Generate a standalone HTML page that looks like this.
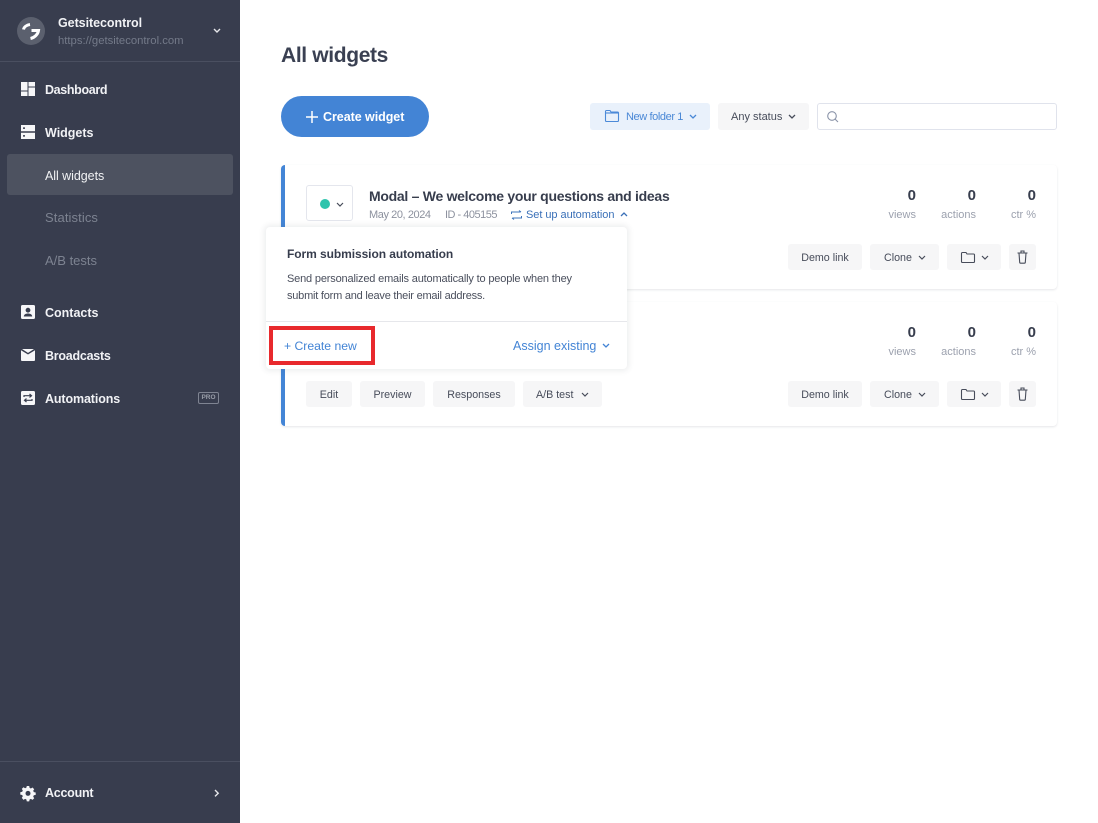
<!DOCTYPE html>
<html lang="en"><head><meta charset="utf-8"><title>All widgets</title>
<style>
html,body{margin:0;padding:0;width:1098px;height:823px;overflow:hidden;background:#fff;font-family:"Liberation Sans",sans-serif;color:#373d4d}
.a{position:absolute}
.t{position:absolute;white-space:nowrap;line-height:16px}
#side{position:absolute;left:0;top:0;width:240px;height:823px;background:#383d4e}
.nav{position:absolute;left:45px;font-size:12.5px;font-weight:700;color:#f1f2f5;line-height:16px;white-space:nowrap;letter-spacing:-.25px}
.sub{font-weight:400;color:#7d8391;font-size:13px;letter-spacing:.1px}
.btn{position:absolute;background:#f6f6f7;border-radius:3px;height:26px;font-size:10.7px;line-height:28px;color:#474c5a;text-align:center;white-space:nowrap}
.card{position:absolute;left:281px;width:776px;background:#fff;border-radius:4px;box-shadow:0 1px 2px rgba(55,61,77,.13)}
.bar{position:absolute;left:0;top:0;bottom:0;width:4px;background:#4385d6;border-radius:4px 0 0 4px}
.num{position:absolute;font-size:15px;font-weight:700;text-align:right;line-height:18px;color:#373d4d}
.lab{position:absolute;font-size:11px;color:#9ca1ae;text-align:right;line-height:14px;white-space:nowrap}
svg{position:absolute;overflow:visible}
</style></head><body>
<div id="side">
<div class="a" style="left:0;top:61px;width:240px;height:1px;background:#4a4f60"></div>
<div class="a" style="left:17px;top:17px;width:28px;height:28px;border-radius:50%;background:#5b606e"></div>
<svg style="left:17px;top:17px" width="28" height="28" fill="none" stroke="#fff" stroke-width="3"><path d="M6.500 12.500C7 10 9.500 8 13 7.500"/><path d="M14.500 13.500h7C21 17 18 20.500 13.500 21.500"/></svg>
<div class="t" style="left:58px;top:15px;font-size:12.500px;font-weight:700;color:#f1f2f5;letter-spacing:-.05px">Getsitecontrol</div>
<div class="t" style="left:58px;top:33px;font-size:11.300px;color:#747a89">https://getsitecontrol.com</div>
<svg style="left:213px;top:28px" width="8" height="6" fill="none" stroke="#e6e7ea" stroke-width="1.400"><path d="M1 1l3 3 3-3"/></svg>

<svg style="left:21px;top:82px" width="14" height="14" fill="#f6f6f8"><path d="M0 0h6.500v8.500H0zM7.500 0H14v4.500H7.500zM0 9.500h6.500V14H0zM7.500 5.500H14V14H7.500z"/></svg>
<div class="nav" style="top:82px;letter-spacing:-.35px">Dashboard</div>
<svg style="left:21px;top:125px" width="14" height="14" fill="#f6f6f8"><path fill-rule="evenodd" d="M0 0h14v6.300H0zM2 2.400v1.500h2V2.400zM0 7.700h14V14H0zM2 10.100v1.500h2v-1.500z"/></svg>
<div class="nav" style="top:125px;letter-spacing:0">Widgets</div>
<div class="a" style="left:7px;top:154px;width:226px;height:41px;background:#4d5260;border-radius:3px"></div>
<div class="nav" style="top:168px;font-weight:400;color:#f1f2f4;letter-spacing:-.05px">All widgets</div>
<div class="nav sub" style="top:210px">Statistics</div>
<div class="nav sub" style="top:253px;letter-spacing:0">A/B tests</div>
<svg style="left:21px;top:305px" width="14" height="14"><rect width="14" height="14" rx="1.500" fill="#f6f6f8"/><circle cx="7" cy="5.200" r="2.400" fill="#383d4e"/><path d="M2.800 11.500c0-2 2-3 4.200-3s4.200 1 4.200 3z" fill="#383d4e"/></svg>
<div class="nav" style="top:305px;letter-spacing:0">Contacts</div>
<svg style="left:21px;top:349px" width="14" height="12"><path d="M0 1.200L7 5.500l7-4.300V11a1 1 0 0 1-1 1H1a1 1 0 0 1-1-1z" fill="#f6f6f8"/><path d="M1 0h12L7 3.900z" fill="#f6f6f8"/></svg>
<div class="nav" style="top:348px">Broadcasts</div>
<svg style="left:21px;top:391px" width="14" height="14"><rect width="14" height="14" rx="1.500" fill="#f6f6f8"/><path d="M3 6V4.700h7M8.500 3l2 1.700-2 1.700M11 8v1.300H4M5.500 7.600l-2 1.700 2 1.700" fill="none" stroke="#383d4e" stroke-width="1.200"/></svg>
<div class="nav" style="top:391px;letter-spacing:-.12px">Automations</div>
<div class="a" style="left:198px;top:392px;width:19px;height:10px;border:1px solid #7f8492;border-radius:2px;font-size:6.500px;font-weight:700;line-height:10px;text-align:center;color:#9a9ea9">PRO</div>
<div class="a" style="left:0;top:761px;width:240px;height:1px;background:#4a4f60"></div>
<svg style="left:21px;top:786px" width="14" height="14" viewBox="0 0 14 14"><path d="M5.800 0h2.400l.4 1.900 1.300.6 1.600-1 1.700 1.700-1 1.600.6 1.300 1.900.4v2.400l-1.900.4-.6 1.300 1 1.600-1.700 1.700-1.600-1-1.300.6-.4 1.900H5.800l-.4-1.900-1.300-.6-1.600 1L.800 11.900l1-1.600-.6-1.300L-.700 8.600V6.200l1.900-.4.6-1.300-1-1.600L2.500 1.200l1.600 1 1.300-.6z" fill="#f6f6f8"/><circle cx="7" cy="7.400" r="2.500" fill="#383d4e"/></svg>
<div class="nav" style="top:785px">Account</div>
<svg style="left:214px;top:789px" width="6" height="9" fill="none" stroke="#e6e7ea" stroke-width="1.400"><path d="M1 1l3.200 3.200L1 7.400"/></svg>
</div>

<div class="t" style="left:281px;top:43px;font-size:21px;line-height:26px;font-weight:700;color:#3a4052;letter-spacing:-.35px">All widgets</div>

<div class="a" style="left:281px;top:96px;width:148px;height:41px;border-radius:21px;background:#4384d5"></div>
<svg style="left:306px;top:111px" width="12" height="12" stroke="#fff" stroke-width="1.500"><path d="M6 0v12M0 6h12"/></svg>
<div class="t" style="left:323px;top:109px;font-size:12.500px;font-weight:700;color:#fff;letter-spacing:-.05px">Create widget</div>

<div class="a" style="left:590px;top:103px;width:120px;height:27px;background:#e9f1fb;border-radius:3px"></div>
<svg style="left:605px;top:110px" width="14" height="13" fill="none" stroke="#4c8ad8" stroke-width="1.100"><path d="M.5 2.500V1.500a1 1 0 0 1 1-1h3.500l1 1.500h6.500a1 1 0 0 1 1 1v7.500a1 1 0 0 1-1 1h-11a1 1 0 0 1-1-1z"/><path d="M.5 3h13"/></svg>
<div class="t" style="left:626px;top:109px;font-size:11px;color:#4a88d6;letter-spacing:-.4px">New folder 1</div>
<svg style="left:689px;top:114px" width="8" height="6" fill="none" stroke="#4a88d6" stroke-width="1.300"><path d="M1 1l3 3 3-3"/></svg>
<div class="a" style="left:718px;top:103px;width:91px;height:27px;background:#f6f6f7;border-radius:3px"></div>
<div class="t" style="left:731px;top:109px;font-size:11px;color:#474c5a">Any status</div>
<svg style="left:788px;top:114px" width="8" height="6" fill="none" stroke="#474c5a" stroke-width="1.300"><path d="M1 1l3 3 3-3"/></svg>
<div class="a" style="left:817px;top:103px;width:238px;height:25px;border:1px solid #e0e3ec;border-radius:3px;background:#fff"></div>
<svg style="left:827px;top:111px" width="12" height="12" fill="none" stroke="#8a93a8" stroke-width="1.100"><circle cx="5" cy="5" r="4.300"/><path d="M8 8l3 3"/></svg>

<!-- card 1 -->
<div class="card" style="top:165px;height:124px"><div class="bar"></div></div>
<div class="a" style="left:306px;top:185px;width:47px;height:36px;border:1px solid #e4e6ed;border-radius:3px;background:#fff;box-sizing:border-box"></div>
<div class="a" style="left:320px;top:199px;width:10px;height:10px;border-radius:50%;background:#2ec4ad"></div>
<svg style="left:336px;top:202px" width="8" height="6" fill="none" stroke="#474c5a" stroke-width="1.200"><path d="M1 1l3 3 3-3"/></svg>
<div class="t" style="left:369px;top:188px;font-size:14px;font-weight:700;color:#373d4d;letter-spacing:-.28px">Modal – We welcome your questions and ideas</div>
<div class="t" style="left:369px;top:207px;font-size:11px;color:#8c919e;letter-spacing:-.42px">May 20, 2024</div>
<div class="t" style="left:445px;top:207px;font-size:11px;color:#8c919e;letter-spacing:-.5px">ID - 405155</div>
<svg style="left:511px;top:210px" width="11" height="10" fill="none" stroke="#3e74bb" stroke-width="1"><path d="M.5 4V2h9M8 .5L10 2M10.500 6v2h-9M3 9.500L1 8"/></svg>
<div class="t" style="left:526px;top:207px;font-size:11px;color:#3a70b8;letter-spacing:-.05px">Set up automation</div>
<svg style="left:620px;top:212px" width="8" height="6" fill="none" stroke="#3a70b8" stroke-width="1.300"><path d="M1 4l3-3 3 3"/></svg>
<div class="num" style="left:880px;width:36px;top:187px">0</div>
<div class="num" style="left:940px;width:36px;top:187px">0</div>
<div class="num" style="left:1000px;width:36px;top:187px">0</div>
<div class="lab" style="left:870px;width:46px;top:208px">views</div>
<div class="lab" style="left:930px;width:46px;top:208px">actions</div>
<div class="lab" style="left:990px;width:46px;top:208px">ctr %</div>
<div class="btn" style="left:788px;top:244px;width:74px">Demo link</div>
<div class="btn" style="left:870px;top:244px;width:69px;text-align:left;text-indent:14px">Clone</div>
<svg style="left:918px;top:255px" width="8" height="6" fill="none" stroke="#474c5a" stroke-width="1.200"><path d="M1 1l3 3 3-3"/></svg>
<div class="btn" style="left:947px;top:244px;width:54px"></div>
<svg style="left:961px;top:252px" width="14" height="11" fill="none" stroke="#474c5a" stroke-width="1.100"><path d="M.5 9.500v-8a1 1 0 0 1 1-1h3.500l1 1.500h6.500a1 1 0 0 1 1 1v6.500a1 1 0 0 1-1 1h-11a1 1 0 0 1-1-1z"/></svg>
<svg style="left:981px;top:255px" width="8" height="6" fill="none" stroke="#474c5a" stroke-width="1.200"><path d="M1 1l3 3 3-3"/></svg>
<div class="btn" style="left:1009px;top:244px;width:27px"></div>
<svg style="left:1017px;top:250px" width="11" height="14" fill="none" stroke="#474c5a" stroke-width="1.100"><path d="M.5 3h10M4 3V1h3v2M2 3l.7 9.500a.8.8 0 0 0 .8.700h4a.8.8 0 0 0 .8-.7L9 3"/></svg>

<!-- card 2 -->
<div class="card" style="top:302px;height:124px"><div class="bar"></div></div>
<div class="num" style="left:880px;width:36px;top:324px">0</div>
<div class="num" style="left:940px;width:36px;top:324px">0</div>
<div class="num" style="left:1000px;width:36px;top:324px">0</div>
<div class="lab" style="left:870px;width:46px;top:345px">views</div>
<div class="lab" style="left:930px;width:46px;top:345px">actions</div>
<div class="lab" style="left:990px;width:46px;top:345px">ctr %</div>
<div class="btn" style="left:306px;top:381px;width:46px">Edit</div>
<div class="btn" style="left:360px;top:381px;width:65px">Preview</div>
<div class="btn" style="left:433px;top:381px;width:82px">Responses</div>
<div class="btn" style="left:523px;top:381px;width:79px;text-align:left;text-indent:13px">A/B test</div>
<svg style="left:581px;top:392px" width="8" height="6" fill="none" stroke="#474c5a" stroke-width="1.200"><path d="M1 1l3 3 3-3"/></svg>
<div class="btn" style="left:788px;top:381px;width:74px">Demo link</div>
<div class="btn" style="left:870px;top:381px;width:69px;text-align:left;text-indent:14px">Clone</div>
<svg style="left:918px;top:392px" width="8" height="6" fill="none" stroke="#474c5a" stroke-width="1.200"><path d="M1 1l3 3 3-3"/></svg>
<div class="btn" style="left:947px;top:381px;width:54px"></div>
<svg style="left:961px;top:389px" width="14" height="11" fill="none" stroke="#474c5a" stroke-width="1.100"><path d="M.5 9.500v-8a1 1 0 0 1 1-1h3.500l1 1.500h6.500a1 1 0 0 1 1 1v6.500a1 1 0 0 1-1 1h-11a1 1 0 0 1-1-1z"/></svg>
<svg style="left:981px;top:392px" width="8" height="6" fill="none" stroke="#474c5a" stroke-width="1.200"><path d="M1 1l3 3 3-3"/></svg>
<div class="btn" style="left:1009px;top:381px;width:27px"></div>
<svg style="left:1017px;top:387px" width="11" height="14" fill="none" stroke="#474c5a" stroke-width="1.100"><path d="M.5 3h10M4 3V1h3v2M2 3l.7 9.500a.8.8 0 0 0 .8.700h4a.8.8 0 0 0 .8-.7L9 3"/></svg>

<!-- popover -->
<div class="a" style="left:266px;top:227px;width:361px;height:142px;background:#fff;border-radius:4px;box-shadow:0 0 6px 2px rgba(55,61,77,.09)"></div>
<div class="t" style="left:287px;top:246px;font-size:12px;font-weight:700;color:#373d4d;letter-spacing:-.07px">Form submission automation</div>
<div class="t" style="left:287px;top:271px;font-size:11px;color:#4a4f5d;letter-spacing:-.17px">Send personalized emails automatically to people when they</div>
<div class="t" style="left:287px;top:288px;font-size:11px;color:#4a4f5d;letter-spacing:-.22px">submit form and leave their email address.</div>
<div class="a" style="left:266px;top:321px;width:361px;height:1px;background:#e6e7eb"></div>
<div class="t" style="left:284px;top:338px;font-size:12.200px;color:#4384d5">+ Create new</div>
<div class="t" style="left:513px;top:338px;font-size:12.500px;color:#4384d5">Assign existing</div>
<svg style="left:602px;top:343px" width="8" height="6" fill="none" stroke="#4384d5" stroke-width="1.300"><path d="M1 1l3 3 3-3"/></svg>
<div class="a" style="left:269px;top:326px;width:106px;height:39px;border:4px solid #e8292d;box-sizing:border-box"></div>
</body></html>
